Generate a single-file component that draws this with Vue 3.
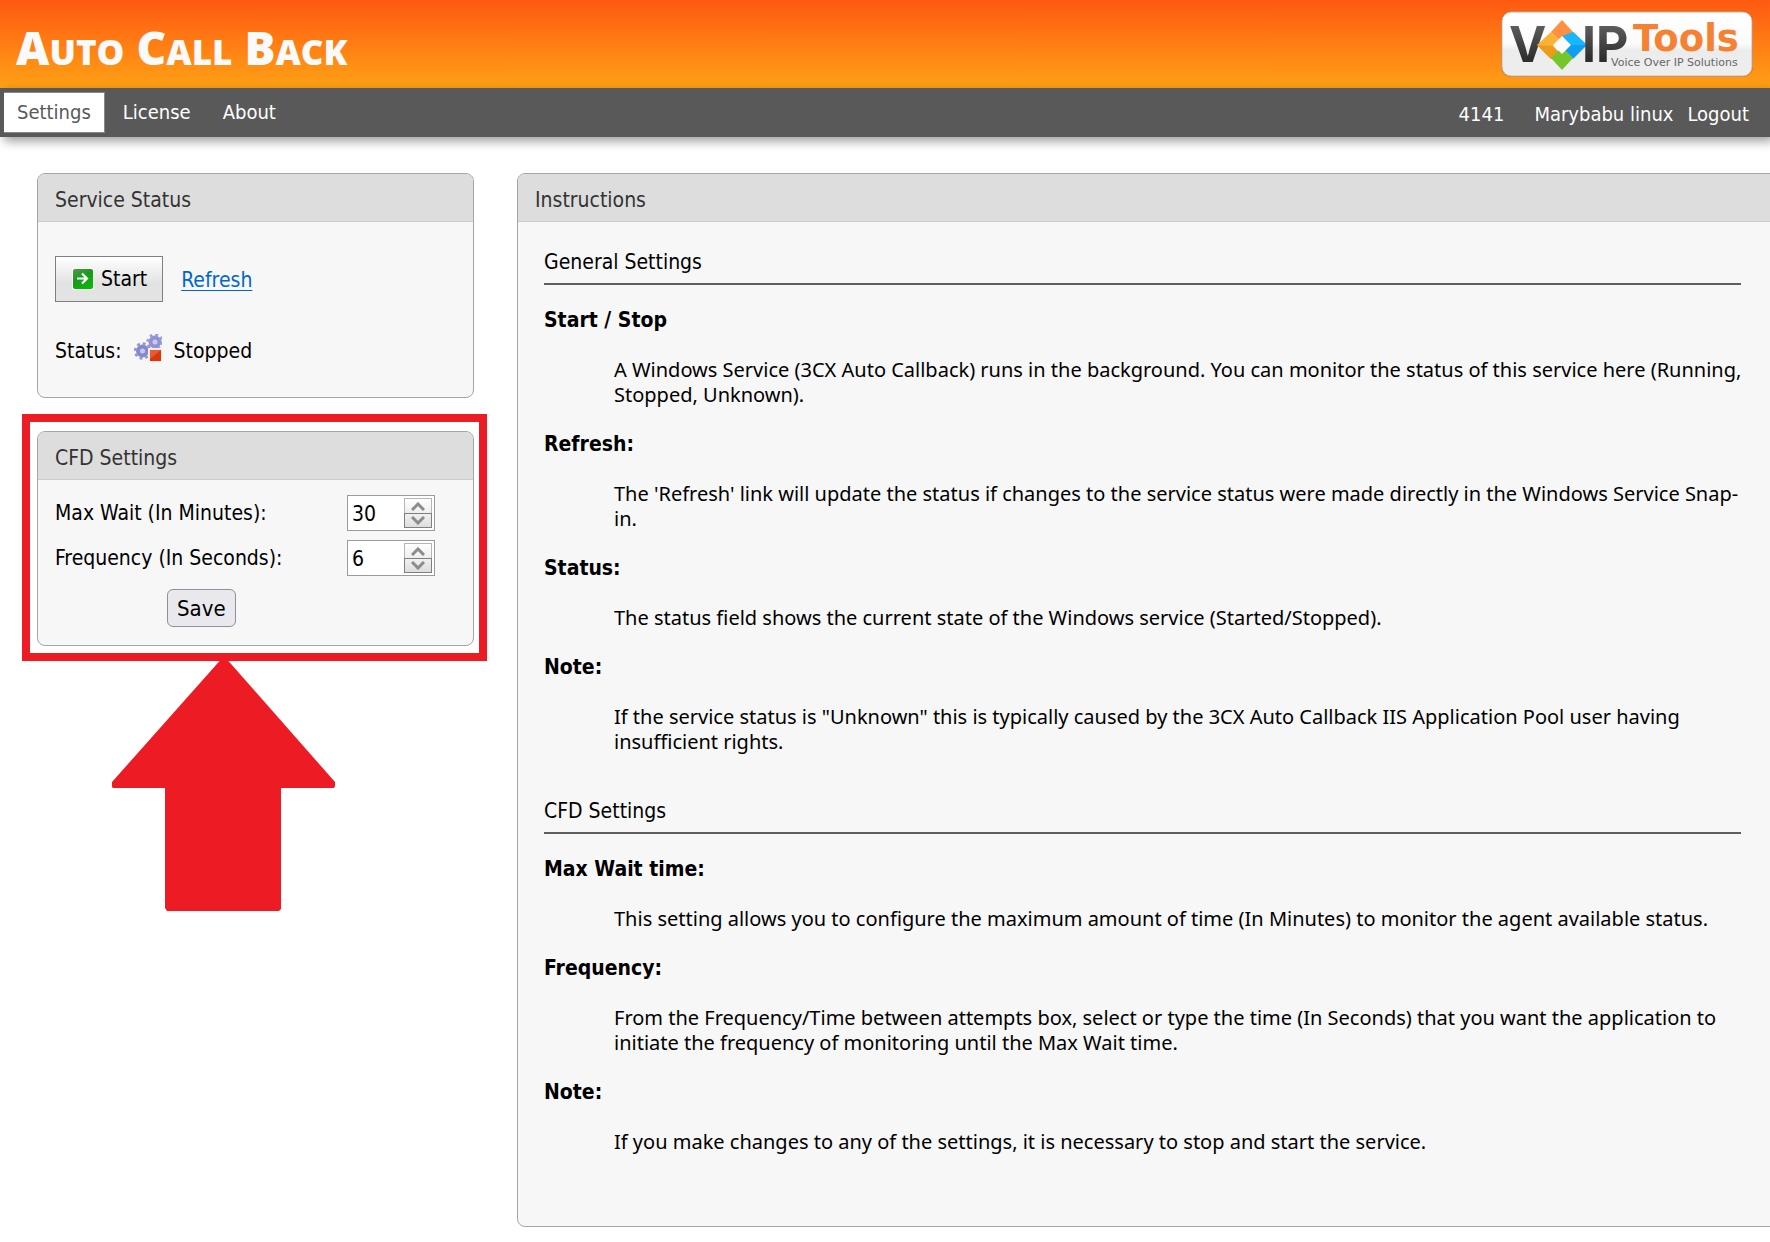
<script setup>
import { ref } from 'vue'

const maxWait = ref('30')
const frequency = ref('6')

function step(field, delta) {
  field.value = String(Math.max(0, Number(field.value) + delta))
}
const stepMaxWait = (delta) => step(maxWait, delta)
const stepFrequency = (delta) => step(frequency, delta)

const sections = [
  {
    title: 'General Settings',
    items: [
      { term: 'Start / Stop', text: 'A Windows Service (3CX Auto Callback) runs in the background. You can monitor the status of this service here (Running, Stopped, Unknown).' },
      { term: 'Refresh:', text: "The 'Refresh' link will update the status if changes to the service status were made directly in the Windows Service Snap-in." },
      { term: 'Status:', text: 'The status field shows the current state of the Windows service (Started/Stopped).' },
      { term: 'Note:', text: 'If the service status is "Unknown" this is typically caused by the 3CX Auto Callback IIS Application Pool user having insufficient rights.' }
    ]
  },
  {
    title: 'CFD Settings',
    items: [
      { term: 'Max Wait time:', text: 'This setting allows you to configure the maximum amount of time (In Minutes) to monitor the agent available status.' },
      { term: 'Frequency:', text: 'From the Frequency/Time between attempts box, select or type the time (In Seconds) that you want the application to initiate the frequency of monitoring until the Max Wait time.' },
      { term: 'Note:', text: 'If you make changes to any of the settings, it is necessary to stop and start the service.' }
    ]
  }
]
</script>

<template>
  <div class="page">
    <header class="banner">
      <h1>A<span>uto</span> C<span>all</span> B<span>ack</span></h1>
      <svg class="logo" width="254" height="68" viewBox="0 0 254 68" role="img" aria-label="VOIP Tools">
        <defs>
          <linearGradient id="plate" x1="0" y1="0" x2="0" y2="1">
            <stop offset="0" stop-color="#ffffff" />
            <stop offset="0.5" stop-color="#fbfbfb" />
            <stop offset="0.6" stop-color="#ececec" />
            <stop offset="1" stop-color="#eeeeee" />
          </linearGradient>
          <linearGradient id="ink" x1="0" y1="0" x2="0" y2="1">
            <stop offset="0.2" stop-color="#5c5c5c" />
            <stop offset="0.75" stop-color="#2e2e2e" />
          </linearGradient>
        </defs>
        <rect x="1" y="1" width="252" height="66" rx="10" fill="#b5540c" opacity="0.55" />
        <rect x="2" y="2" width="250" height="64" rx="9" fill="url(#plate)" stroke="#c9b8a8" />
        <text class="mark" x="9" y="52" fill="url(#ink)">V</text>
        <g transform="translate(62 35)">
          <path d="M0-25 11-13 0-2-11-13Z" fill="#ff9040" />
          <path d="M-11-13 0-2-9 1 0 11-11 14-25 0Z" fill="#f9b233" />
          <path d="M-25 0-9 1 0 11-11 14Z" fill="#ee9b1c" />
          <path d="M0-2 11-13 25 0 11 14 0 2Z" fill="#0f9ff2" />
          <path d="M11-13 25 0H9L0-9Z" fill="#18b6ff" />
          <path d="M0 25-11 13 0 2 11 13Z" fill="#76c52a" />
          <path d="M0-9 9 0 0 9-9 0Z" fill="#fafafa" />
        </g>
        <text class="mark" x="82" y="52" fill="url(#ink)">I</text>
        <text class="mark" x="96" y="52" fill="url(#ink)">P</text>
        <text class="tools" x="133" y="41">Tools</text>
        <text class="tagline" x="111" y="56">Voice Over IP Solutions</text>
      </svg>
    </header>

    <nav class="menu">
      <div class="tabs">
        <a href="#settings" class="tab active">Settings</a>
        <a href="#license" class="tab">License</a>
        <a href="#about" class="tab">About</a>
      </div>
      <div class="user">
        <span class="ext">4141</span>
        <span>Marybabu linux</span>
        <a href="#logout">Logout</a>
      </div>
    </nav>

    <main class="content">
      <div class="side">
        <section class="panel">
          <h2>Service Status</h2>
          <div class="status-body">
            <div class="actions">
              <button type="button" class="start">
                <svg width="22" height="22" viewBox="0 0 22 22" aria-hidden="true">
                  <defs>
                    <linearGradient id="green" x1="0" y1="0" x2="0.6" y2="1">
                      <stop offset="0" stop-color="#4f9a4c" />
                      <stop offset="0.5" stop-color="#189a1c" />
                      <stop offset="1" stop-color="#0bb50b" />
                    </linearGradient>
                  </defs>
                  <rect width="22" height="22" rx="2" fill="#ffffff" />
                  <rect x="1" y="1" width="20" height="20" rx="2" fill="url(#green)" />
                  <path d="M5 10.5H15M10 5.500l5 5-5 5" fill="none" stroke="#ffffff" stroke-width="2.200" />
                </svg>
                <span>Start</span>
              </button>
              <a href="#refresh" class="refresh">Refresh</a>
            </div>
            <div class="state">
              <span>Status:</span>
              <svg width="28" height="28" viewBox="0 0 28 28" aria-hidden="true">
                <circle cx="21" cy="8" r="4.500" fill="#c9caea" stroke="#8f93d2" stroke-width="4" />
                <circle cx="21" cy="8" r="7.200" fill="none" stroke="#9b9edb" stroke-width="3" stroke-dasharray="2.830 2.830" />
                <circle cx="8.500" cy="17" r="4.500" fill="#c9caea" stroke="#8589cc" stroke-width="4" />
                <circle cx="8.500" cy="17" r="7.200" fill="none" stroke="#9396d4" stroke-width="3" stroke-dasharray="2.830 2.830" />
                <rect x="14" y="14" width="14" height="14" fill="#f7ece8" />
                <rect x="16" y="16" width="11" height="11" fill="#d8380c" />
                <path d="M16 16H27L16 25Z" fill="#e85a30" />
              </svg>
              <span>Stopped</span>
            </div>
          </div>
        </section>

        <div class="highlight">
          <section class="panel">
            <h2>CFD Settings</h2>
            <form class="cfd" @submit.prevent>
              <div class="field">
                <label for="max-wait">Max Wait (In Minutes):</label>
                <div class="spinner">
                  <input id="max-wait" v-model="maxWait" type="text" inputmode="numeric">
                  <div class="steps">
                    <button type="button" aria-label="Increase max wait" @click="stepMaxWait(1)">
                      <svg width="14" height="9" viewBox="0 0 14 9"><path d="M1 8 7 2l6 6" /></svg>
                    </button>
                    <button type="button" class="down" aria-label="Decrease max wait" @click="stepMaxWait(-1)">
                      <svg width="14" height="9" viewBox="0 0 14 9"><path d="M1 1l6 6 6-6" /></svg>
                    </button>
                  </div>
                </div>
              </div>
              <div class="field">
                <label for="frequency">Frequency (In Seconds):</label>
                <div class="spinner">
                  <input id="frequency" v-model="frequency" type="text" inputmode="numeric">
                  <div class="steps">
                    <button type="button" aria-label="Increase frequency" @click="stepFrequency(1)">
                      <svg width="14" height="9" viewBox="0 0 14 9"><path d="M1 8 7 2l6 6" /></svg>
                    </button>
                    <button type="button" class="down" aria-label="Decrease frequency" @click="stepFrequency(-1)">
                      <svg width="14" height="9" viewBox="0 0 14 9"><path d="M1 1l6 6 6-6" /></svg>
                    </button>
                  </div>
                </div>
              </div>
              <button type="submit" class="save">Save</button>
            </form>
          </section>
          <svg class="arrow" width="224" height="255" viewBox="0 0 224 255" aria-hidden="true">
            <path d="M112 0 223 126V130L222 132H169V253L167 255H55L53 252V132H1L0 131V126Z" fill="#ed1c24" />
          </svg>
        </div>
      </div>

      <section class="panel instructions">
        <h2>Instructions</h2>
        <div class="text">
          <section v-for="section in sections" :key="section.title" class="topic">
            <h3>{{ section.title }}</h3>
            <dl>
              <template v-for="item in section.items" :key="item.term">
                <dt>{{ item.term }}</dt>
                <dd>{{ item.text }}</dd>
              </template>
            </dl>
          </section>
        </div>
      </section>
    </main>
  </div>
</template>

<style>
body {
  margin: 0;
  background: #ffffff;
}
</style>

<style scoped>
.page {
  overflow: hidden;
  color: #000000;
  font-family: "DejaVu Sans Condensed", Tahoma, "DejaVu Sans", sans-serif;
  font-size: 21px;
  line-height: 25px;
}

.page * {
  box-sizing: border-box;
}

.banner {
  display: flex;
  align-items: center;
  justify-content: space-between;
  height: 88px;
  padding: 0 16px;
  background: linear-gradient(#ff5912, #ffa116);
}

h1 {
  margin: 4px 0 0;
  color: #fafafa;
  font-family: "Open Sans", "Noto Sans", sans-serif;
  font-size: 46px;
  font-variant: small-caps;
  font-weight: 800;
  line-height: 60px;
}

h1 span {
  font-size: 50px;
}

.logo {
  flex: none;
}

.mark {
  font-family: Inter, sans-serif;
  font-size: 50px;
  font-weight: 700;
}

.tools {
  fill: #f58233;
  font-family: "DejaVu Sans", sans-serif;
  font-size: 37px;
  font-weight: 700;
}

.tagline {
  fill: #666666;
  font-family: "DejaVu Sans", sans-serif;
  font-size: 11px;
}

.menu {
  display: flex;
  align-items: center;
  justify-content: space-between;
  height: 49px;
  padding: 0 21px 0 4px;
  background: #595959;
  box-shadow: 4px 4px 10px rgba(0, 0, 0, 0.4);
  color: #ffffff;
  font-size: 20px;
}

.menu a {
  color: inherit;
  text-decoration: none;
}

.tabs,
.user {
  display: flex;
  align-items: center;
}

.tabs {
  gap: 4px;
}

.tab {
  padding: 8px 14px;
}

.menu .active {
  border: 1px solid #888888;
  border-width: 1px 1px 1px 0;
  padding: 7px 13px;
  background: #ffffff;
  color: #595959;
}

.user {
  gap: 14px;
  padding-top: 4px;
}

.ext {
  margin-right: 16px;
}

.content {
  display: flex;
  align-items: flex-start;
  gap: 43px;
  padding: 36px 0 0 37px;
}

.side {
  flex: none;
  width: 437px;
}

.panel {
  border: 1px solid #a5a5a5;
  border-radius: 8px;
  background: #f7f7f7;
}

h2 {
  margin: 0;
  border-bottom: 1px solid #cccccc;
  border-radius: 7px 7px 0 0;
  padding: 14px 17px 8px;
  background: #dddddd;
  color: #333333;
  font-size: 21px;
  font-weight: 400;
  line-height: 25px;
}

.status-body {
  padding: 34px 17px 29px;
}

.actions {
  display: flex;
  align-items: center;
  gap: 18px;
}

.start {
  display: flex;
  align-items: center;
  gap: 7px;
  height: 46px;
  border: 1px solid #7f7f7f;
  padding: 0 15px 0 16px;
  background: linear-gradient(#ffffff, #e2e2e2 60%, #e4e4e4);
  color: #000000;
  font: inherit;
}

.refresh {
  padding-top: 3px;
  color: #0066cc;
  text-decoration-thickness: 1px;
  text-underline-offset: 3px;
}

.state {
  display: flex;
  align-items: center;
  gap: 12px;
  padding-top: 32px;
}

.state svg {
  margin-bottom: 6px;
}

.highlight {
  position: relative;
  margin: 16px -13px 0 -15px;
  border: 8px solid #ed1c24;
  padding: 9px 5px 7px 7px;
}

.arrow {
  position: absolute;
  top: 234px;
  left: 82px;
}

.cfd {
  display: flex;
  flex-direction: column;
  gap: 9px;
  padding: 15px 38px 18px 17px;
}

.field {
  display: flex;
  align-items: center;
  justify-content: space-between;
}

.spinner {
  display: flex;
  align-items: center;
  width: 88px;
  height: 36px;
  border: 1px solid #9b9b9b;
  padding: 0 2px 0 4px;
  background: #ffffff;
}

.spinner input {
  flex: 1;
  width: 0;
  border: 0;
  padding: 2px 0 0;
  outline: 0;
  background: none;
  color: #000000;
  font: inherit;
}

.steps {
  display: flex;
  flex-direction: column;
  width: 28px;
}

.steps button {
  display: flex;
  align-items: center;
  justify-content: center;
  height: 15px;
  border: 1px solid #b5b5b5;
  border-bottom: 0;
  padding: 0;
  background: linear-gradient(#ffffff, #eeeeee);
}

.steps .down {
  border: 1px solid #7f7f7f;
  background: linear-gradient(#f0f0f0, #dedede);
}

.steps path {
  fill: none;
  stroke: #8c8c8c;
  stroke-width: 3;
}

.save {
  align-self: flex-start;
  height: 38px;
  margin: 4px 0 0 112px;
  border: 1px solid #8f8f9d;
  border-radius: 6px;
  padding: 2px 9px 0;
  background: #e9e9ed;
  color: #000000;
  font-family: inherit;
  font-size: 22px;
  line-height: 28px;
}

.instructions {
  flex: 1;
  margin-right: -20px;
}

.text {
  padding: 28px 24px 70px 26px;
}

.topic + .topic {
  padding-top: 43px;
}

h3 {
  margin: 0 24px 0 0;
  border-bottom: 2px solid #5f5f5f;
  padding-bottom: 8px;
  font-size: 21px;
  font-weight: 400;
  line-height: 25px;
}

dl {
  margin: 0;
}

dt {
  padding: 23px 0 24px;
  font-weight: 700;
}

dd {
  margin: 0 20px 2px 70px;
  font-family: "Noto Sans", Tahoma, sans-serif;
  font-size: 20px;
}
</style>
